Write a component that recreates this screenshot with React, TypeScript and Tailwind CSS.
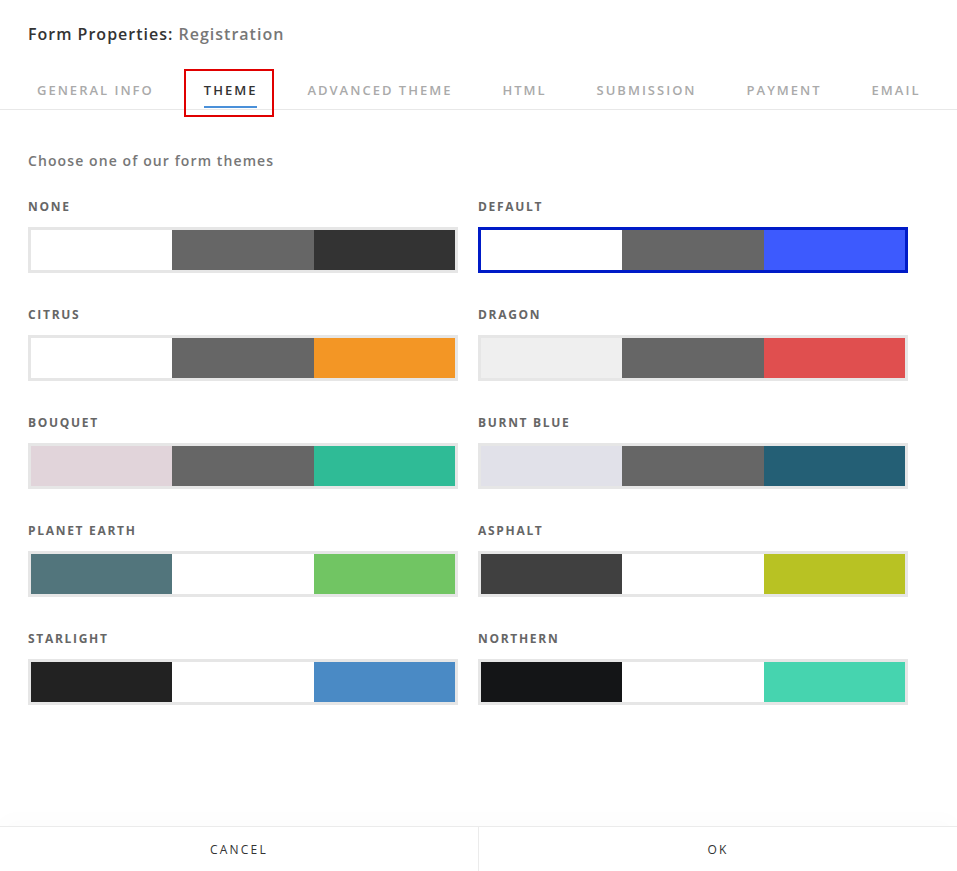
import React from "react";

type Theme = { name: string; colors: [string, string, string]; selected?: boolean };

const themes: Theme[] = [
  { name: "NONE", colors: ["#ffffff", "#666666", "#333333"] },
  { name: "DEFAULT", colors: ["#ffffff", "#666666", "#3d5afe"], selected: true },
  { name: "CITRUS", colors: ["#ffffff", "#666666", "#f39625"] },
  { name: "DRAGON", colors: ["#efefef", "#666666", "#e04f4f"] },
  { name: "BOUQUET", colors: ["#e1d4da", "#666666", "#2fbb96"] },
  { name: "BURNT BLUE", colors: ["#e1e1e9", "#666666", "#245f75"] },
  { name: "PLANET EARTH", colors: ["#52757c", "#ffffff", "#71c563"] },
  { name: "ASPHALT", colors: ["#404040", "#ffffff", "#b8c223"] },
  { name: "STARLIGHT", colors: ["#222222", "#ffffff", "#4a8ac5"] },
  { name: "NORTHERN", colors: ["#141517", "#ffffff", "#46d4af"] },
];

const tabs = ["GENERAL INFO", "THEME", "ADVANCED THEME", "HTML", "SUBMISSION", "PAYMENT", "EMAIL"];

export default function App() {
  return (
    <div
      className="relative flex h-[871px] w-[957px] flex-col bg-white"
      style={{ fontFamily: '"Open Sans", "Liberation Sans", sans-serif' }}
    >
      <div className="pl-[28px] pt-[24px] text-[16px] font-semibold leading-[20px] tracking-[1px] text-[#333]">
        Form Properties: <span className="text-[#777]">Registration</span>
      </div>

      <div className="mt-[25px] flex h-[41px] border-b border-[#e8e8e8] pl-[12px]">
        {tabs.map((t) => {
          const active = t === "THEME";
          return (
            <div key={t} className="relative flex h-[40px] items-center px-[25px] pt-[2px]">
              <span
                className={`relative text-[13px] font-semibold leading-[16px] tracking-[2px] ${
                  active ? "text-[#333]" : "text-[#aaaaaa]"
                }`}
              >
                {t}
                {active && (
                  <span className="absolute left-0 right-0 top-[24px] h-[2px] bg-[#4a90d9]" />
                )}
              </span>
            </div>
          );
        })}
      </div>

      <div className="flex-1 px-[28px] pt-[41px]">
        <div className="text-[14px] font-semibold leading-[20px] tracking-[1.1px] text-[#777]">
          Choose one of our form themes
        </div>
        <div className="mt-[28px] grid grid-cols-[430px_430px] gap-x-[20px]">
          {themes.map((th) => (
            <div key={th.name} className="mb-[34px]">
              <div className="text-[12px] font-bold leading-[16px] tracking-[1.7px] text-[#666]">
                {th.name}
              </div>
              <div
                className={`mt-[12px] flex h-[46px] border-[3px] ${
                  th.selected ? "border-[#001bc7]" : "border-[#e6e6e6]"
                }`}
              >
                <div className="flex-1" style={{ backgroundColor: th.colors[0] }} />
                <div className="flex-1" style={{ backgroundColor: th.colors[1] }} />
                <div className="flex-1" style={{ backgroundColor: th.colors[2] }} />
              </div>
            </div>
          ))}
        </div>
      </div>

      <div className="flex h-[45px] border-t border-[#ebebeb] shadow-[0_-10px_20px_rgba(0,0,0,0.012)]">
        <div className="flex w-[479px] items-center justify-center border-r border-[#ebebeb] pt-[2px] text-[12px] leading-[16px] tracking-[2.2px] text-[#333]">
          CANCEL
        </div>
        <div className="flex flex-1 items-center justify-center pt-[2px] text-[12px] leading-[16px] tracking-[2.2px] text-[#333]">
          OK
        </div>
      </div>

      <div className="pointer-events-none absolute left-[184px] top-[69px] h-[48px] w-[90px] border-2 border-[#e00000]" />
    </div>
  );
}
